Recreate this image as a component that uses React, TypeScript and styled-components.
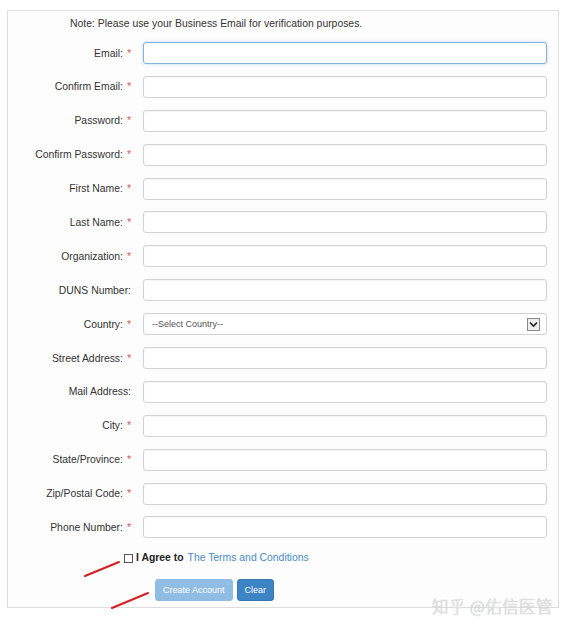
import React from "react";
import styled, { createGlobalStyle } from "styled-components";

const Global = createGlobalStyle`
  html, body { margin: 0; padding: 0; background: #ffffff; }
  body { font-family: "Liberation Sans", Arial, sans-serif; color: #333; }
`;

const Page = styled.div`
  position: relative;
  width: 568px;
  height: 628px;
  padding: 10px 0 0 7px;
  box-sizing: border-box;
`;

const Panel = styled.div`
  width: 552px;
  height: 598px;
  box-sizing: border-box;
  border: 1px solid #dedede;
  background: #fdfdfd;
  padding: 6px 11px 0 0;
  display: flex;
  flex-direction: column;
`;

const Note = styled.div`
  font-size: 10.4px;
  line-height: 14px;
  color: #333;
  padding-left: 62px;
  margin-bottom: 11px;
`;

const FormGrid = styled.div`
  display: grid;
  grid-template-columns: 123px 404px;
  column-gap: 12px;
  row-gap: 11.9px;
  align-items: center;
`;

const Label = styled.label`
  font-size: 10.4px;
  color: #333;
  text-align: right;
  white-space: nowrap;
`;

const Star = styled.span`
  color: #d9534f;
  margin-left: 4px;
`;

const Input = styled.input<{ $focused?: boolean }>`
  height: 22px;
  box-sizing: border-box;
  width: 100%;
  border: 1px solid ${(p) => (p.$focused ? "#86b2d8" : "#d2d2d2")};
  border-radius: 3px;
  background: #fff;
  box-shadow: ${(p) =>
    p.$focused ? "0 0 3px rgba(102,160,220,0.45)" : "inset 0 1px 1px rgba(0,0,0,0.04)"};
  outline: none;
  font-family: inherit;
  font-size: 11px;
`;

const SelectBox = styled.div`
  height: 22px;
  box-sizing: border-box;
  border: 1px solid #d2d2d2;
  border-radius: 3px;
  background: #fff;
  display: flex;
  align-items: center;
  justify-content: space-between;
  padding: 0 6px 0 8px;
  font-size: 9px;
  color: #555;
`;

const Arrow = styled.span`
  width: 13px;
  height: 13px;
  box-sizing: border-box;
  border: 1px solid #888;
  background: #eee;
  display: flex;
  align-items: center;
  justify-content: center;
`;

const AgreeRow = styled.div`
  display: flex;
  align-items: center;
  padding-left: 116px;
  margin-top: 13px;
  font-size: 10.4px;
`;

const Check = styled.span`
  width: 7px;
  height: 7px;
  border: 1px solid #555;
  background: #fff;
  margin-top: 3px;
  margin-right: 3px;
`;

const Bold = styled.span`
  font-weight: bold;
  color: #222;
  margin-right: 4px;
`;

const Link = styled.a`
  color: #4a8cc4;
  text-decoration: none;
`;

const ButtonRow = styled.div`
  display: flex;
  gap: 4px;
  padding-left: 147px;
  margin-top: 16px;
`;

const Button = styled.button<{ $disabled?: boolean }>`
  height: 22px;
  padding: 0 7px;
  border-radius: 3px;
  border: 1px solid ${(p) => (p.$disabled ? "#8fbbe2" : "#3476b6")};
  background: ${(p) => (p.$disabled ? "#8fbde4" : "#3d84c4")};
  color: #fff;
  font-family: inherit;
  font-size: 9px;
`;

const Watermark = styled.div`
  position: absolute;
  left: 432px;
  top: 594px;
  font-family: "Noto Sans CJK SC", "Liberation Sans", sans-serif;
  font-size: 16.5px;
  font-weight: 300;
  color: #e6e6e6;
  text-shadow: 0 0 1px #a8a8a8;
  letter-spacing: 0.4px;
`;

const Annotation = styled.svg`
  position: absolute;
  left: 0;
  top: 0;
  pointer-events: none;
`;

const fields: { label: string; required: boolean; type?: "select"; focused?: boolean }[] = [
  { label: "Email:", required: true, focused: true },
  { label: "Confirm Email:", required: true },
  { label: "Password:", required: true },
  { label: "Confirm Password:", required: true },
  { label: "First Name:", required: true },
  { label: "Last Name:", required: true },
  { label: "Organization:", required: true },
  { label: "DUNS Number:", required: false },
  { label: "Country:", required: true, type: "select" },
  { label: "Street Address:", required: true },
  { label: "Mail Address:", required: false },
  { label: "City:", required: true },
  { label: "State/Province:", required: true },
  { label: "Zip/Postal Code:", required: true },
  { label: "Phone Number:", required: true },
];

export default function App() {
  return (
    <>
      <Global />
      <Page>
        <Panel>
          <Note>Note: Please use your Business Email for verification purposes.</Note>
          <FormGrid>
            {fields.map((f) => (
              <React.Fragment key={f.label}>
                <Label>
                  {f.label}
                  {f.required && <Star>*</Star>}
                </Label>
                {f.type === "select" ? (
                  <SelectBox>
                    <span>--Select Country--</span>
                    <Arrow>
                      <svg width="9" height="7" viewBox="0 0 9 7">
                        <path d="M1 1.5 L4.5 5 L8 1.5" fill="none" stroke="#222" strokeWidth="1.6" />
                      </svg>
                    </Arrow>
                  </SelectBox>
                ) : (
                  <Input $focused={f.focused} readOnly />
                )}
              </React.Fragment>
            ))}
          </FormGrid>
          <AgreeRow>
            <Check />
            <Bold>I Agree to</Bold>
            <Link>The Terms and Conditions</Link>
          </AgreeRow>
          <ButtonRow>
            <Button $disabled>Create Account</Button>
            <Button>Clear</Button>
          </ButtonRow>
        </Panel>
        <Watermark>知乎 @佑信医管</Watermark>
        <Annotation width="568" height="628" viewBox="0 0 568 628">
          <path d="M85 576 L119 562" stroke="#d42020" strokeWidth="2" strokeLinecap="round" />
          <path d="M112 608 L148 593" stroke="#d42020" strokeWidth="2" strokeLinecap="round" />
        </Annotation>
      </Page>
    </>
  );
}
